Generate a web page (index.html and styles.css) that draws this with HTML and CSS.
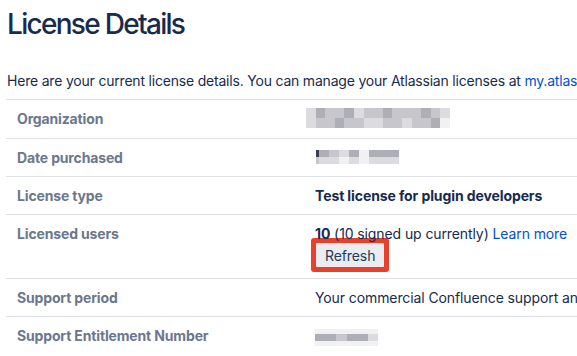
FILE: index.html
```html
<!DOCTYPE html>
<html lang="en">
<head>
  <meta charset="UTF-8" />
  <meta name="viewport" content="width=device-width, initial-scale=1.0"/>
  <title>License Details</title>
  <link rel="stylesheet" href="styles.css">
</head>
<body>
  <div class="page">
    <h1 class="page-title">License Details</h1>
    <p class="intro">Here are your current license details. You can manage your Atlassian licenses at <a href="#" class="link">my.atlassian.com</a>.</p>

    <table class="license-table">
      <tr>
        <th>Organization</th>
        <td>
          <span class="mosaic mosaic-org">
            <span class="row"><i class="m1"></i><i class="m3"></i><i class="m2"></i><i class="m2"></i><i class="m3"></i><i class="m1"></i><i class="m2"></i><i class="m2"></i><i class="m3"></i><i class="m2"></i><i class="m2"></i><i class="m2"></i><i class="m3"></i><i class="m2"></i><i class="m1"></i></span>
            <span class="row"><i class="m1"></i><i class="m2"></i><i class="m2"></i><i class="m3"></i><i class="m2"></i><i class="m2"></i><i class="m1"></i><i class="m1"></i><i class="m2"></i><i class="m2"></i><i class="m1"></i><i class="m2"></i><i class="m2"></i><i class="m3"></i><i class="m0"></i></span>
          </span>
        </td>
      </tr>
      <tr>
        <th>Date purchased</th>
        <td>
          <span class="mosaic mosaic-date">
            <span class="row"><i class="m4 thin"></i><i class="m3"></i><i class="m2"></i><i class="m1"></i><i class="m3"></i><i class="m0"></i><i class="m3"></i><i class="m3"></i><i class="m3"></i></span>
            <span class="row"><i class="m2 thin"></i><i class="m1"></i><i class="m1"></i><i class="m0"></i><i class="m1"></i><i class="m0"></i><i class="m1"></i><i class="m1"></i><i class="m1"></i></span>
          </span>
        </td>
      </tr>
      <tr>
        <th>License type</th>
        <td><strong>Test license for plugin developers</strong></td>
      </tr>
      <tr>
        <th>Licensed users</th>
        <td>
          <div><strong>10</strong> (10 signed up currently) <a href="#" class="link">Learn more</a></div>
          <div class="highlight"><button class="btn">Refresh</button></div>
        </td>
      </tr>
      <tr>
        <th>Support period</th>
        <td>Your commercial Confluence support and updates are available until further notice.</td>
      </tr>
      <tr>
        <th>Support Entitlement Number</th>
        <td>
          <span class="mosaic mosaic-sen">
            <span class="row"><i class="m0"></i><i class="m0"></i><i class="m0"></i><i class="m0"></i><i class="m0"></i><i class="m0"></i></span>
            <span class="row"><i class="m3"></i><i class="m3"></i><i class="m2"></i><i class="m3"></i><i class="m3"></i><i class="m1"></i></span>
            <span class="row"><i class="m0"></i><i class="m0"></i><i class="m0"></i><i class="m0"></i><i class="m0"></i><i class="m0"></i></span>
          </span>
        </td>
      </tr>
    </table>
  </div>
</body>
</html>
```

FILE: styles.css
```css
html, body {
  margin: 0;
  padding: 0;
  background: #fff;
  overflow: hidden;
  font-family: 'Inter', 'Liberation Sans', Arial, sans-serif;
  color: #172b4d;
  font-size: 14px;
  letter-spacing: -0.1px;
}
.page {
  width: 820px;
  padding: 2px 7px 0 7px;
}
.page-title {
  font-size: 28px;
  font-weight: 500;
  letter-spacing: -1.7px;
  margin: 0;
  padding-top: 6px;
  line-height: 32px;
}
.intro {
  margin: 31px 0 0 0;
  line-height: 20px;
  letter-spacing: -0.2px;
  white-space: nowrap;
}
.link {
  color: #0052cc;
  text-decoration: none;
}
/* -- TABEL -- */
.license-table {
  width: 100%;
  table-layout: fixed;
  margin: 8px 0 0 -1px;
  border-collapse: collapse;
}
.license-table tr {
  border-top: 1px solid #dfe1e6;
  border-bottom: 1px solid #dfe1e6;
}
.license-table th,
.license-table td {
  vertical-align: top;
  padding: 10px 10px 10px 10px;
  line-height: 17px;
  text-align: left;
  white-space: nowrap;
  overflow: visible;
}
.license-table th {
  width: 278px;
  padding-left: 11px;
  color: #6b778c;
  font-weight: 700;
  letter-spacing: -0.15px;
}
.license-table strong { font-weight: 700; }
.highlight {
  width: max-content;
  margin: -4px 0 -4px -4px;
  border: 5px solid #e8402a;
  border-radius: 3px;
  background: #e8402a;
}
.btn {
  display: block;
  border: none;
  background: #ebecf0;
  color: #253858;
  font-family: inherit;
  font-size: 14px;
  letter-spacing: -0.1px;
  height: 24px;
  padding: 0 9px;
  border-radius: 1px;
}
/* -- BLUR MOSAIC -- */
.mosaic {
  display: inline-flex;
  flex-direction: column;
  vertical-align: top;
}
.mosaic .row { display: flex; }
.mosaic i { display: block; }
.mosaic-org { margin: -2px 0 0 -9px; }
.mosaic-org i { width: 9.6px; height: 10px; }
.mosaic-date { margin: 1px 0 0 1px; }
.mosaic-date i { width: 10px; height: 7px; }
.mosaic-date i.thin { width: 3px; }
.mosaic-sen { margin: 2px 0 0 0; }
.mosaic-sen i { width: 10.5px; height: 5px; }
.mosaic-sen .row:nth-child(2) i { height: 7px; }
.m0 { background: #f1f1f3; }
.m1 { background: #dcdce0; }
.m2 { background: #c6c6cc; }
.m3 { background: #aeaeb6; }
.m4 { background: #3a3f52; }
```
